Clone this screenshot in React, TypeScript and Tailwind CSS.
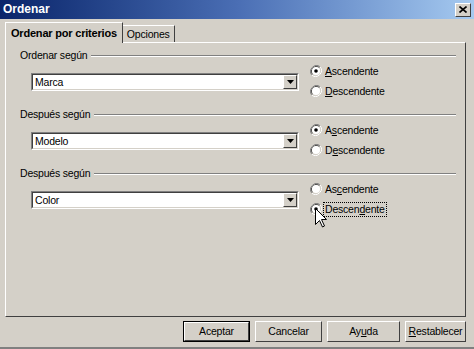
import type { ReactNode } from 'react';

const font = "font-['Tahoma','Liberation_Sans',Arial,sans-serif]";

function Radio({ checked }: { checked: boolean }) {
    return (
        <svg width="12" height="12" viewBox="0 0 12 12" className="shrink-0">
            <path d="M10.2 1.8 A6 6 0 0 0 1.8 10.2" fill="none" stroke="#808080" strokeWidth="1" />
            <path d="M9.5 2.5 A5 5 0 0 0 2.5 9.5" fill="none" stroke="#404040" strokeWidth="1" />
            <path d="M1.8 10.2 A6 6 0 0 0 10.2 1.8" fill="none" stroke="#ffffff" strokeWidth="1" />
            <path d="M2.5 9.5 A5 5 0 0 0 9.5 2.5" fill="none" stroke="#d4d0c8" strokeWidth="1" />
            <circle cx="6" cy="6" r="4" fill="#ffffff" />
            {checked && <circle cx="6" cy="6" r="1.8" fill="#000000" />}
        </svg>
    );
}

function Option({ checked, label, focus }: { checked: boolean; label: ReactNode; focus?: boolean }) {
    return (
        <div className="flex items-center h-[20px]">
            <Radio checked={checked} />
            <span
                className={`ml-[2px] px-[1px] leading-[13px] ${focus ? 'outline outline-1 outline-dotted outline-black' : ''}`}
            >
                {label}
            </span>
        </div>
    );
}

function Select({ value }: { value: string }) {
    return (
        <div className="w-[268px] h-[18px] border-t border-l border-t-[#808080] border-l-[#808080] border-b border-r border-b-white border-r-white">
            <div className="h-full flex items-center bg-white border-t border-l border-t-[#404040] border-l-[#404040] border-b border-r border-b-[#d4d0c8] border-r-[#d4d0c8]">
                <span className="flex-1 pl-[2px] leading-[13px]">{value}</span>
                <div className="w-[14px] h-[14px] bg-[#d4d0c8] border-t border-l border-t-white border-l-white border-b border-r border-b-[#404040] border-r-[#404040] flex items-center justify-center">
                    <svg width="7" height="4" viewBox="0 0 7 4">
                        <path d="M0 0h7L3.5 4z" fill="#000" />
                    </svg>
                </div>
            </div>
        </div>
    );
}

function Section({ title, value, children }: { title: string; value: string; children: ReactNode }) {
    return (
        <div className="mb-[8px]">
            <div className="h-[11px] flex items-center pl-[14px] pr-[9px]">
                <span className="leading-[11px] pr-[4px]">{title}</span>
                <div className="flex-1 border-t border-t-[#808080] border-b border-b-white" />
            </div>
            <div className="h-[40px] flex items-center">
                <div className="ml-[25px] mt-[2px]">
                    <Select value={value} />
                </div>
                <div className="ml-[11px] flex flex-col">{children}</div>
            </div>
        </div>
    );
}

function Button({ children, primary, w }: { children: ReactNode; primary?: boolean; w: string }) {
    return (
        <div className={`${w} h-[21px] ${primary ? 'border border-black' : ''}`}>
            <div className="h-full flex items-center justify-center bg-[#d4d0c8] border-t border-l border-t-white border-l-white border-b border-r border-b-[#404040] border-r-[#404040]">
                <span className="leading-[13px]">{children}</span>
            </div>
        </div>
    );
}

export default function App() {
    return (
        <div className={`w-[474px] h-[349px] bg-[#d4d0c8] text-[10.5px] tracking-[-0.2px] text-black flex flex-col relative overflow-hidden ${font}`}>
            {/* Title bar */}
            <div className="h-[19px] flex items-center bg-gradient-to-r from-[#0a246a] via-[#4a6eb4] to-[#a6caf0] px-[3px]">
                <span className="text-white font-bold text-[12px] tracking-normal leading-[13px]">Ordenar</span>
                <div className="ml-auto w-[16px] h-[14px] bg-[#d4d0c8] border-t border-l border-t-white border-l-white border-b border-r border-b-[#404040] border-r-[#404040] flex items-center justify-center">
                    <svg width="8" height="7" viewBox="0 0 8 7">
                        <path d="M0.5 0.5 7.5 6.5M7.5 0.5 0.5 6.5" stroke="#000" strokeWidth="1.6" />
                    </svg>
                </div>
            </div>

            <div className="px-[5px] pr-[8px] pt-[3px] flex flex-col">
                {/* Tabs */}
                <div className="flex items-end h-[20px]">
                    <div className="relative z-10 h-[21px] -mb-[1px] px-[5px] flex items-center bg-[#d4d0c8] border-t border-l border-t-white border-l-white border-r border-r-[#404040]">
                        <span className="font-bold text-[11px] tracking-[-0.2px] leading-[13px]">Ordenar por criterios</span>
                    </div>
                    <div className="h-[17px] px-[4px] flex items-center border-t border-t-white border-r border-r-[#404040]">
                        <span className="leading-[13px]">Opciones</span>
                    </div>
                </div>

                {/* Panel */}
                <div className="h-[275px] border-t border-l border-t-white border-l-white border-r border-b border-r-[#404040] border-b-[#404040] pt-[7px]">
                    <Section title="Ordenar según" value="Marca">
                        <Option checked label={<><u>A</u>scendente</>} />
                        <Option checked={false} label={<><u>D</u>escendente</>} />
                    </Section>
                    <Section title="Después según" value="Modelo">
                        <Option checked label={<>A<u>s</u>cendente</>} />
                        <Option checked={false} label={<>D<u>e</u>scendente</>} />
                    </Section>
                    <Section title="Después según" value="Color">
                        <Option checked={false} label={<>As<u>c</u>endente</>} />
                        <Option checked focus label={<>Descen<u>d</u>ente</>} />
                    </Section>
                </div>

                {/* Buttons */}
                <div className="flex justify-end gap-[5px] mt-[4px]">
                    <Button primary w="w-[67px]">Aceptar</Button>
                    <Button w="w-[67px]">Cancelar</Button>
                    <Button w="w-[73px]">Ay<u>u</u>da</Button>
                    <Button w="w-[61px]"><u>R</u>establecer</Button>
                </div>
            </div>

            <div className="mt-auto h-[2px] bg-[#808080]" />

            {/* Mouse cursor */}
            <svg width="12" height="20" viewBox="0 0 12 20" className="absolute left-[315px] top-[208px]">
                <path d="M0.5 0.5V16.5L4.5 12.5L7.5 19L9.5 18L6.5 11.5H11.5Z" fill="#fff" stroke="#000" strokeWidth="1" strokeLinejoin="miter" />
            </svg>
        </div>
    );
}
